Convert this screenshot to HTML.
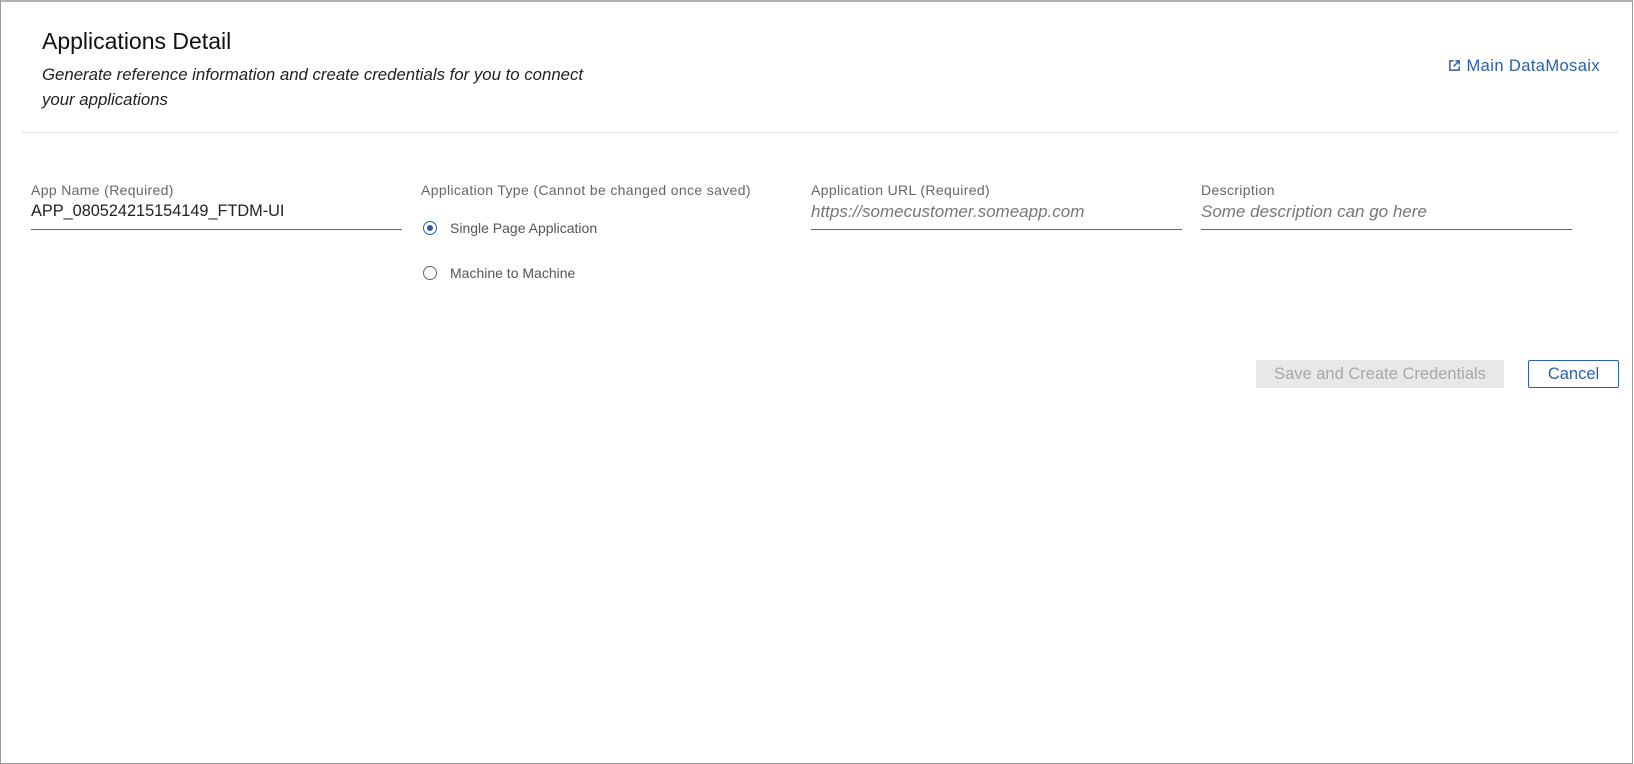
<!DOCTYPE html>
<html><head><meta charset="utf-8"><style>
html,body{margin:0;padding:0;width:1634px;height:764px;overflow:hidden;background:#fff;font-family:"Liberation Sans",Arial,sans-serif;}
.frame{position:absolute;left:0;top:0;width:1631px;height:761px;border:1px solid #9a9a9a;border-top:2px solid #b0b0b0;box-sizing:content-box;}
.abs{position:absolute;white-space:nowrap;}
.title{left:42px;top:28px;font-size:23px;color:#111;}
.sub{left:42px;font-size:16.8px;font-style:italic;color:#222;}
.link{right:34px;top:57px;font-size:16.5px;letter-spacing:0.4px;color:#2a5fa8;}
.div{left:22px;top:132px;width:1596px;height:1px;background:#e3e3e3;}
.lbl{top:182px;font-size:14px;letter-spacing:0.35px;color:#666;}
.val{top:202px;font-size:16.3px;color:#222;}
.ph{font-style:italic;color:#777;font-size:17px;}
.ul{top:229px;width:371px;height:1px;background:#666;}
.radio{width:14px;height:14px;border:1.5px solid #666;border-radius:50%;box-sizing:border-box;}
.rl{font-size:14px;color:#555;}
.btn{top:360px;height:28px;font-size:16.5px;line-height:28px;text-align:center;box-sizing:border-box;}
</style></head><body>
<div class="frame"></div>
<div class="abs title">Applications Detail</div>
<div class="abs sub" style="top:65px">Generate reference information and create credentials for you to connect</div>
<div class="abs sub" style="top:90px">your applications</div>
<div class="abs link"><svg width="13" height="13" viewBox="0 0 14 14" style="vertical-align:-1px;margin-right:6px"><path d="M6 2H2v10h10V8M8 2h4v4M12 2L6 8" fill="none" stroke="#2a5fa8" stroke-width="1.6"/></svg>Main DataMosaix</div>
<div class="abs div"></div>

<div class="abs lbl" style="left:31px">App Name (Required)</div>
<div class="abs val" style="left:31px">APP_080524215154149_FTDM-UI</div>
<div class="abs ul" style="left:31px"></div>

<div class="abs lbl" style="left:421px">Application Type (Cannot be changed once saved)</div>
<div class="abs radio" style="left:423px;top:221px;border-color:#2a5fa8;"><div style="width:6px;height:6px;border-radius:50%;background:#2a5fa8;margin:2.5px"></div></div>
<div class="abs rl" style="left:450px;top:220px">Single Page Application</div>
<div class="abs radio" style="left:423px;top:266px"></div>
<div class="abs rl" style="left:450px;top:265px">Machine to Machine</div>

<div class="abs lbl" style="left:811px">Application URL (Required)</div>
<div class="abs val ph" style="left:811px">https://somecustomer.someapp.com</div>
<div class="abs ul" style="left:811px"></div>

<div class="abs lbl" style="left:1201px">Description</div>
<div class="abs val ph" style="left:1201px">Some description can go here</div>
<div class="abs ul" style="left:1201px"></div>

<div class="abs btn" style="left:1256px;width:248px;background:#e8e8e8;color:#a8a8a8;border-radius:2px">Save and Create Credentials</div>
<div class="abs btn" style="left:1528px;width:91px;border:1px solid #2a5fa8;color:#2a5fa8;border-radius:2px;line-height:26px">Cancel</div>
</body></html>
